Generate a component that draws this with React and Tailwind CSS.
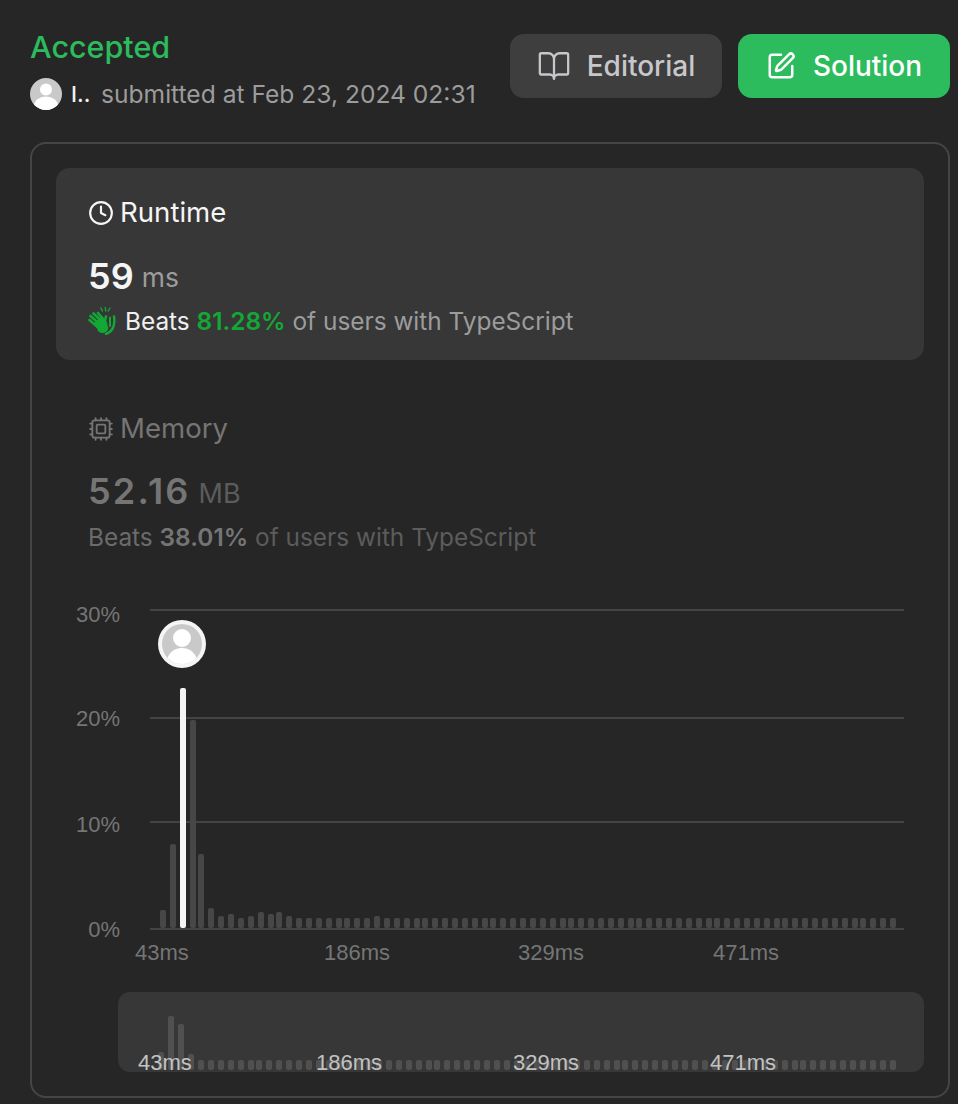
import { BookOpen, SquarePen, Clock, Cpu } from 'lucide-react'

// bar heights for the first few buckets, the rest sit at the floor
const tops = [910, 844, 688, 720, 854, 908, 916, 914, 918, 916, 912, 914, 912, 916]
const bumps = { 22: 916 }
const barCount = 76

function barX(i) {
  return Math.round((160 + i * (730 / 75)) / 2) * 2
}

function Avatar({ size }) {
  return (
    <svg width={size} height={size} viewBox="0 0 32 32" className="shrink-0">
      <circle cx="16" cy="16" r="16" fill="#c9c9c9" />
      <clipPath id={'av' + size}><circle cx="16" cy="16" r="16" /></clipPath>
      <g clipPath={'url(#av' + size + ')'} fill="#fff">
        <circle cx="16" cy="11.5" r="6" />
        <ellipse cx="16" cy="28" rx="12" ry="9.5" />
      </g>
    </svg>
  )
}

function Clap() {
  return (
    <svg width="30" height="28" viewBox="0 0 30 28" className="block shrink-0" fill="none" stroke="#13a835" strokeLinecap="round">
      <g strokeWidth="2.6">
        <path d="M1.5 13 L9 19.5" />
        <path d="M2.5 9 L11 16.5" />
        <path d="M5.5 6.5 L13 13.5" />
        <path d="M10 6 L15 12" />
        <path d="M18 9.5 L16.5 15" />
      </g>
      <path d="M7 16 L14 10 L18 15 L19.5 21 C18.5 25.5 14 26.5 11 24 Z" fill="#13a835" stroke="#13a835" strokeWidth="1.5" strokeLinejoin="round" />
      <path d="M22 10.5 L22 19" strokeWidth="2" />
      <path d="M26 9.5 C26.8 15 26.5 24 18 27" strokeWidth="2.4" />
      <g strokeWidth="1.4">
        <path d="M13 1 L14.3 4" />
        <path d="M17.3 0.6 L17.7 4" />
        <path d="M22 1 L20.2 4" />
      </g>
    </svg>
  )
}

function MainChart() {
  const lines = [[610, '30%', 622], [718, '20%', 726], [822, '10%', 832], [929, '0%', 937]]
  const xLabels = [['43ms', 135], ['186ms', 324], ['329ms', 518], ['471ms', 713]]
  return (
    <svg width="916" height="386" viewBox="32 590 916 386" className="block" style={{ fontFamily: '"Liberation Sans", Arial, sans-serif' }}>
      {lines.map(([y, label, ty]) => (
        <g key={label}>
          <rect x="150" y={y - 1} width="754" height="2" fill="#444444" />
          <text x="120" y={ty} textAnchor="end" fontSize="22" fill="#757575">{label}</text>
        </g>
      ))}
      {Array.from({ length: barCount }).map((_, i) => {
        const top = tops[i] ?? bumps[i] ?? 918
        return <rect key={i} x={barX(i)} y={top} width="6" height={928 - top} rx="2" fill={i === 2 ? '#f5f5f5' : '#474747'} />
      })}
      {xLabels.map(([t, x]) => (
        <text key={t} x={x} y="960" fontSize="22" fill="#757575">{t}</text>
      ))}
      <circle cx="182" cy="644" r="24" fill="#f5f5f5" />
      <circle cx="182" cy="644" r="20" fill="#c9c9c9" />
      <clipPath id="mk"><circle cx="182" cy="644" r="20" /></clipPath>
      <g clipPath="url(#mk)" fill="#fff">
        <circle cx="182" cy="638" r="9" />
        <ellipse cx="182" cy="662" rx="15" ry="14" />
      </g>
    </svg>
  )
}

function MiniChart() {
  const xLabels = [['43ms', 138], ['186ms', 316], ['329ms', 513], ['471ms', 710]]
  const miniTops = { 0: 1052, 1: 1016, 2: 1024, 3: 1054 }
  return (
    <div className="ml-[86px] mr-[24px] h-[80px] rounded-xl bg-[#373737]">
      <svg width="806" height="80" viewBox="118 992 806 80" className="block overflow-visible" style={{ fontFamily: '"Liberation Sans", Arial, sans-serif' }}>
        {Array.from({ length: 75 }).map((_, i) => {
          const x = Math.round((158 + i * (732 / 74)) / 2) * 2
          const top = miniTops[i] ?? 1060
          return <rect key={i} x={x} y={top} width="6" height={1070 - top} rx="2" fill="#505050" />
        })}
        {xLabels.map(([t, x]) => (
          <text key={t} x={x} y="1070" fontSize="22" fill="#c2c2c2">{t}</text>
        ))}
      </svg>
    </div>
  )
}

export default function App() {
  return (
    <div className="w-[958px] h-[1104px] overflow-hidden bg-[#262626] font-['Inter',sans-serif]">
      <div className="flex justify-between pl-[30px] pr-[8px] h-[142px]">
        <div>
          <div className="pt-[27px] text-[30.5px] leading-[40px] font-medium text-[#2cbb5d]">Accepted</div>
          <div className="mt-[11px] flex items-center h-[32px] text-[24.6px] text-[#9c9c9c]">
            <Avatar size={32} />
            <span className="ml-[9px] text-[#f0f0f0] font-medium w-[30px] overflow-hidden text-[22px]">I..</span>
            <span>submitted at Feb 23, 2024 02:31</span>
          </div>
        </div>
        <div className="flex gap-4 pt-[34px]">
          <div className="w-[212px] h-[64px] rounded-[14px] bg-[#3e3e3e] flex items-center justify-center gap-[16px] text-[28px] font-medium text-[#c8c8cc]">
            <BookOpen size={34} strokeWidth={1.6} />
            Editorial
          </div>
          <div className="w-[212px] h-[64px] rounded-[14px] bg-[#2cbb5d] flex items-center justify-center gap-[17px] text-[28px] font-medium text-white">
            <SquarePen size={30} strokeWidth={2} />
            Solution
          </div>
        </div>
      </div>

      <div className="ml-[30px] w-[920px] h-[956px] border-2 border-[#454545] rounded-[16px] pt-[24px]">
        <div className="mx-[24px] h-[192px] rounded-[14px] bg-[#373737] px-[32px] pt-[28px]">
          <div className="flex items-center gap-[6px] h-[34px] text-[27.6px] text-[#f5f5f5]">
            <Clock size={26} strokeWidth={2} />
            Runtime
          </div>
          <div className="mt-[20px] flex items-baseline gap-[8px] h-[44px]">
            <span className="text-[36px] font-semibold text-[#f5f5f5] -translate-y-[1px]">59</span>
            <span className="text-[26.5px] text-[#9c9c9c] -translate-y-[3px]">ms</span>
          </div>
          <div className="mt-[11px] flex items-center h-[32px] text-[24.4px] text-[#f0f0f0] whitespace-pre">
            <span className="mr-[7px]"><Clap /></span>
            <span>Beats </span>
            <span className="font-semibold text-[#13a835]">81.28%</span>
            <span className="text-[#9c9c9c]"> of users with TypeScript</span>
          </div>
        </div>

        <div className="mx-[24px] h-[192px] px-[32px] pt-[52px] text-[#6b6b6b]">
          <div className="flex items-center gap-[6px] h-[34px] text-[27.6px] text-[#757575]">
            <Cpu size={26} strokeWidth={1.7} />
            Memory
          </div>
          <div className="mt-[18px] flex items-baseline gap-[8px] h-[44px]">
            <span className="text-[36px] font-semibold tracking-[2.2px] text-[#757575]">52.16</span>
            <span className="text-[27px] text-[#5c5c5c] -translate-y-[1px]">MB</span>
          </div>
          <div className="mt-[13px] flex items-center h-[32px] text-[24.4px] whitespace-pre">
            <span>Beats </span>
            <span className="font-semibold text-[#757575]">38.01%</span>
            <span className="text-[#5c5c5c]"> of users with TypeScript</span>
          </div>
        </div>

        <div className="mt-[38px]">
          <MainChart />
        </div>
        <div className="mt-[16px]">
          <MiniChart />
        </div>
      </div>
    </div>
  )
}
